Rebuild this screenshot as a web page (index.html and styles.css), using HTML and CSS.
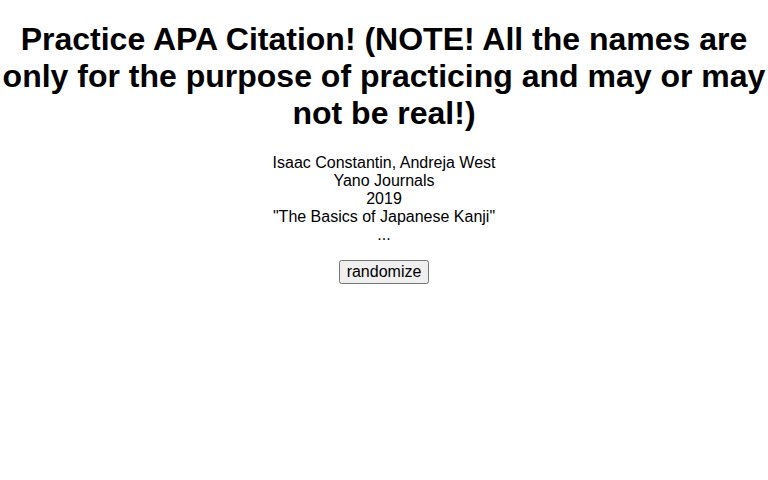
FILE: index.html
```html
<!DOCTYPE html>
<html>
<head>
<meta charset="utf-8">
<link rel="stylesheet" href="styles.css">
</head>
<body class="page">
<h1 class="title">Practice APA Citation! (NOTE! All the names are only for the purpose of practicing and may or may not be real!)</h1>
<div class="citation">
<div>Isaac Constantin, Andreja West</div>
<div>Yano Journals</div>
<div>2019</div>
<div>"The Basics of Japanese Kanji"</div>
<div>...</div>
</div>
<p class="actions"><button class="btn">randomize</button></p>
</body>
</html>
```
FILE: styles.css
```css
.page {
  margin: 0;
  font-family: "Liberation Sans", Arial, sans-serif;
  font-size: 16px;
  text-align: center;
  color: #000;
  background: #fff;
}
.title {
  font-size: 32px;
  font-weight: bold;
  margin: 21.44px 0;
}
.citation {
  line-height: normal;
}
.actions {
  margin: 16px 0;
}
.btn {
  font-family: "Liberation Sans", Arial, sans-serif;
  font-size: 16px;
  padding: 1px 6px;
}
```
